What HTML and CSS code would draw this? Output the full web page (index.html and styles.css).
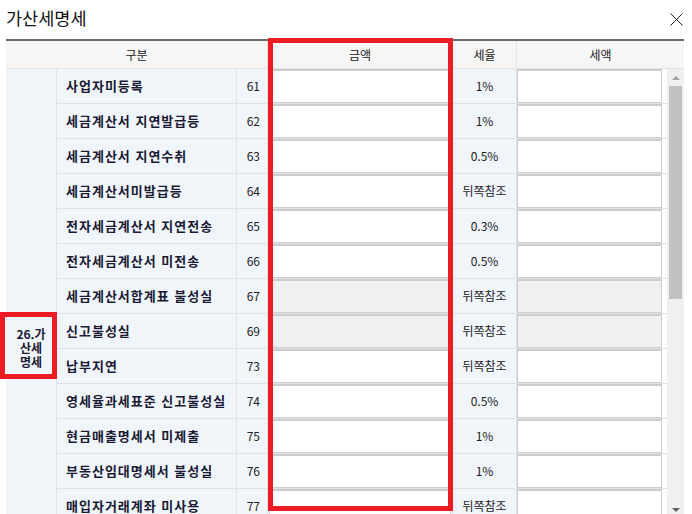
FILE: index.html
```html
<!DOCTYPE html>
<html lang="ko">
<head>
  <meta charset="UTF-8">
  <meta name="viewport" content="width=device-width, initial-scale=1.0">
  <title>가산세명세</title>
  <link rel="stylesheet" href="styles.css">
</head>
<body>
  <div class="dialog">
    <div class="title-bar">
      <h1 class="title">가산세명세</h1>
      <svg class="close" viewBox="0 0 13 13"><path d="M0.5 0.5L12.5 12.5M12.5 0.5L0.5 12.5"/></svg>
    </div>
    <div class="grid">
      <div class="grid-head">
        <div class="head-cell">구분</div>
        <div class="head-cell">금액</div>
        <div class="head-cell">세율</div>
        <div class="head-cell last">세액</div>
      </div>
      <div class="grid-body">
        <div class="viewport">
          <div class="group"><span class="group-name">26.가산세명세</span></div>
          <div class="rows">
            <div class="row">
              <div class="label">사업자미등록</div><div class="num">61</div>
              <div class="amount"><span class="field"></span></div><div class="rate">1%</div>
              <div class="tax"><span class="field"></span></div>
            </div>
            <div class="row">
              <div class="label">세금계산서 지연발급등</div><div class="num">62</div>
              <div class="amount"><span class="field"></span></div><div class="rate">1%</div>
              <div class="tax"><span class="field"></span></div>
            </div>
            <div class="row">
              <div class="label">세금계산서 지연수취</div><div class="num">63</div>
              <div class="amount"><span class="field"></span></div><div class="rate">0.5%</div>
              <div class="tax"><span class="field"></span></div>
            </div>
            <div class="row">
              <div class="label">세금계산서미발급등</div><div class="num">64</div>
              <div class="amount"><span class="field"></span></div><div class="rate">뒤쪽참조</div>
              <div class="tax"><span class="field"></span></div>
            </div>
            <div class="row">
              <div class="label">전자세금계산서 지연전송</div><div class="num">65</div>
              <div class="amount"><span class="field"></span></div><div class="rate">0.3%</div>
              <div class="tax"><span class="field"></span></div>
            </div>
            <div class="row">
              <div class="label">전자세금계산서 미전송</div><div class="num">66</div>
              <div class="amount"><span class="field"></span></div><div class="rate">0.5%</div>
              <div class="tax"><span class="field"></span></div>
            </div>
            <div class="row">
              <div class="label">세금계산서합계표 불성실</div><div class="num">67</div>
              <div class="amount"><span class="field disabled"></span></div><div class="rate">뒤쪽참조</div>
              <div class="tax"><span class="field disabled"></span></div>
            </div>
            <div class="row">
              <div class="label">신고불성실</div><div class="num">69</div>
              <div class="amount"><span class="field disabled"></span></div><div class="rate">뒤쪽참조</div>
              <div class="tax"><span class="field disabled"></span></div>
            </div>
            <div class="row">
              <div class="label">납부지연</div><div class="num">73</div>
              <div class="amount"><span class="field"></span></div><div class="rate">뒤쪽참조</div>
              <div class="tax"><span class="field"></span></div>
            </div>
            <div class="row">
              <div class="label">영세율과세표준 신고불성실</div><div class="num">74</div>
              <div class="amount"><span class="field"></span></div><div class="rate">0.5%</div>
              <div class="tax"><span class="field"></span></div>
            </div>
            <div class="row">
              <div class="label">현금매출명세서 미제출</div><div class="num">75</div>
              <div class="amount"><span class="field"></span></div><div class="rate">1%</div>
              <div class="tax"><span class="field"></span></div>
            </div>
            <div class="row">
              <div class="label">부동산임대명세서 불성실</div><div class="num">76</div>
              <div class="amount"><span class="field"></span></div><div class="rate">1%</div>
              <div class="tax"><span class="field"></span></div>
            </div>
            <div class="row">
              <div class="label">매입자거래계좌 미사용</div><div class="num">77</div>
              <div class="amount"><span class="field"></span></div><div class="rate">뒤쪽참조</div>
              <div class="tax"><span class="field"></span></div>
            </div>
          </div>
        </div>
        <div class="scrollbar">
          <div class="scroll-btn"><span class="arrow-up"></span></div>
          <div class="thumb"></div>
          <div class="scroll-space"></div>
          <div class="scroll-btn"><span class="arrow-down"></span></div>
        </div>
      </div>
    </div>
    <!-- 강조 표시 -->
    <div class="mark mark-amount"></div>
    <div class="mark mark-group"></div>
  </div>
</body>
</html>
```

FILE: styles.css
```css
* {
  box-sizing: border-box;
}
html, body {
  margin: 0;
  overflow: hidden;
}
body {
  background: #fff;
  font-family: "Noto Sans CJK KR", "Noto Sans", sans-serif;
  color: #222;
}
.dialog {
  position: relative;
  width: 692px;
  height: 514px;
  padding: 0 8px 0 6px;
}
.title-bar {
  display: flex;
  justify-content: space-between;
  height: 39px;
}
.title {
  margin: 0;
  padding-top: 5px;
  font-size: 17.5px;
  font-weight: normal;
  line-height: 25px;
  color: #111;
}
.close {
  width: 13px;
  height: 13px;
  margin-top: 13px;
  margin-right: 1px;
  fill: none;
  stroke: #222;
  stroke-width: 1;
}
.grid-head {
  display: grid;
  grid-template-columns: 262px 185px 64px 167px;
  height: 30px;
  border-top: 2px solid #6b6b6b;
  border-bottom: 1px solid #e3e3e3;
  background: #f6f6f6;
}
.head-cell {
  border-right: 1px solid #e3e3e3;
  font-size: 12px;
  line-height: 27px;
  text-align: center;
}
.head-cell.last {
  border-right: none;
}
.grid-body {
  display: flex;
  height: 449px;
}
.viewport {
  display: flex;
  width: 661px;
  overflow: hidden;
}
.group {
  flex: none;
  width: 51px;
  padding-top: 258px;
  display: flex;
  justify-content: center;
  align-items: flex-start;
  border-right: 1px solid #dde2e8;
  background: #f0f5fa;
}
.group-name {
  width: 31px;
  font-size: 12px;
  font-weight: bold;
  line-height: 14px;
  text-align: center;
  word-break: break-all;
  color: #1a1a33;
}
.rows {
  flex: 1;
}
.row {
  display: grid;
  grid-template-columns: 180px 31px 185px 64px 150px;
  height: 35px;
  border-bottom: 1px solid #dde2e8;
}
.label {
  padding-left: 9px;
  border-right: 1px solid #dde2e8;
  background: #f0f5fa;
  font-size: 13px;
  font-weight: bold;
  line-height: 34px;
  letter-spacing: 1px;
  white-space: nowrap;
  color: #1a1a33;
}
.num {
  padding-right: 7px;
  border-right: 1px solid #dde2e8;
  background: #f0f5fa;
  font-size: 12px;
  line-height: 34px;
  text-align: right;
}
.amount {
  padding: 0 1px;
  border-right: 1px solid #dde2e8;
}
.rate {
  border-right: 1px solid #dde2e8;
  background: #f0f5fa;
  font-size: 12px;
  line-height: 34px;
  text-align: center;
}
.tax {
  padding-right: 5px;
}
.field {
  display: block;
  height: 100%;
  border: 1px solid #cdcdcd;
  border-top-width: 2px;
  background: #fff;
}
.field.disabled {
  background: #f0f0f0;
}
.scrollbar {
  display: flex;
  flex-direction: column;
  width: 17px;
  background: #f0f0f0;
}
.scroll-btn {
  display: flex;
  justify-content: center;
  align-items: center;
  height: 17px;
}
.arrow-up {
  border-left: 4px solid transparent;
  border-right: 4px solid transparent;
  border-bottom: 4px solid #a3a3a3;
}
.arrow-down {
  border-left: 4px solid transparent;
  border-right: 4px solid transparent;
  border-top: 4px solid #606060;
}
.thumb {
  height: 213px;
  margin: 0 2px 0 2px;
  background: #c1c1c1;
}
.scroll-space {
  flex: 1;
}
.mark {
  position: absolute;
  border: 5px solid #ed1c24;
}
.mark-amount {
  left: 268px;
  top: 38px;
  width: 185px;
  height: 473px;
}
.mark-group {
  left: 0;
  top: 312px;
  width: 57px;
  height: 67px;
}
```
